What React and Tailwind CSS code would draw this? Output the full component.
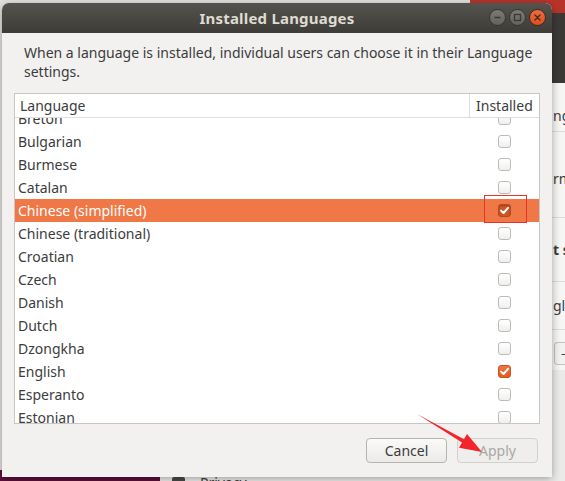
import React from 'react';

const languages = [
  'Breton',
  'Bulgarian',
  'Burmese',
  'Catalan',
  'Chinese (simplified)',
  'Chinese (traditional)',
  'Croatian',
  'Czech',
  'Danish',
  'Dutch',
  'Dzongkha',
  'English',
  'Esperanto',
  'Estonian',
];

const installed = ['Chinese (simplified)', 'English'];
const selected = 'Chinese (simplified)';

const Check = ({ checked, active }) => {
  if (!checked) {
    return (
      <span className="block w-[13px] h-[13px] rounded-[3px] border border-[#bdbcb9] bg-gradient-to-b from-white to-[#efefee]" />
    );
  }
  return (
    <span
      className={
        active
          ? 'flex items-center justify-center w-[13px] h-[13px] rounded-[3px] border border-[#b4491f] bg-[#cf5727] shadow-[inset_0_1px_2px_rgba(0,0,0,0.25)]'
          : 'flex items-center justify-center w-[13px] h-[13px] rounded-[3px] border border-[#c9521f] bg-gradient-to-b from-[#f0743f] to-[#e15a25]'
      }
    >
      <svg width="11" height="11" viewBox="0 0 11 11">
        <path d="M2 5.6 L4.5 8 L9 2.8" fill="none" stroke="white" strokeWidth="2" strokeLinecap="round" strokeLinejoin="round" />
      </svg>
    </span>
  );
};

const WinButton = ({ kind }) => {
  if (kind === 'close') {
    return (
      <span className="flex items-center justify-center w-[17px] h-[17px] rounded-full bg-gradient-to-b from-[#f26b3a] to-[#df4f1c] border border-[#3a2a22]">
        <svg width="9" height="9" viewBox="0 0 9 9">
          <path d="M2 2 L7 7 M7 2 L2 7" stroke="#3a2d27" strokeWidth="1.4" strokeLinecap="round" />
        </svg>
      </span>
    );
  }
  return (
    <span className="flex items-center justify-center w-[17px] h-[17px] rounded-full bg-gradient-to-b from-[#7c7a74] to-[#64625d] border border-[#35342f]">
      {kind === 'min' ? (
        <svg width="9" height="9" viewBox="0 0 9 9">
          <path d="M1.5 4.5 H7.5" stroke="#3a3935" strokeWidth="1.4" />
        </svg>
      ) : (
        <svg width="9" height="9" viewBox="0 0 9 9">
          <rect x="1.5" y="1.5" width="6" height="6" fill="none" stroke="#3a3935" strokeWidth="1.3" />
        </svg>
      )}
    </span>
  );
};

export default function App() {
  return (
    <div className="relative w-[565px] h-[481px] overflow-hidden bg-[#e4e3e1] font-['Noto_Sans',sans-serif]">
      {/* desktop windows behind the dialog */}
      <div className="absolute left-[470px] top-0 w-[95px] h-[13px] bg-[#b8342b]" />
      <div className="absolute left-[552px] top-[13px] w-[60px] h-[470px] flex flex-col bg-[#f6f6f5]">
        <div className="h-[70px] bg-[#3b3a37]" />
        <div className="h-[49px] border-b border-[#dcdcda] flex items-end pb-[5px] text-[14px] text-[#3c3c3c] pl-[1px]">ng</div>
        <div className="h-[86px] border-b border-[#dcdcda] flex items-center pt-[8px] text-[14px] text-[#3c3c3c] pl-[1px]">rm</div>
        <div className="h-[64px] border-b border-[#dcdcda] flex items-center text-[14px] font-bold text-[#3c3c3c] pl-[1px]">t s</div>
        <div className="h-[48px] border-b border-[#dcdcda] flex items-center text-[14px] text-[#3c3c3c] pl-[1px]">gl</div>
        <div className="h-[40px] pt-[12px] pl-[2px]">
          <div className="h-[23px] rounded-l-[4px] border border-r-0 border-[#c4c3bf] bg-[#f2f2f1] flex items-center pl-[6px] text-[#444] text-[13px]">–</div>
        </div>
        <div className="flex-1 bg-[#ebebea]" />
      </div>
      <div className="absolute left-0 top-[470px] w-[160px] h-[11px] bg-[#5e0f3b]" />
      <div className="absolute left-[160px] top-[470px] w-[392px] h-[11px] bg-[#efefee] flex">
        <span className="ml-[12px] mt-[7px] w-[13px] h-[8px] bg-[#4a4a48] rounded-[2px]" />
        <span className="ml-[15px] mt-[6px] text-[14px] leading-[14px] text-[#3c3c3c]">Privacy</span>
      </div>

      {/* dialog */}
      <div className="absolute left-[2px] top-[3px] w-[550px] h-[474px] flex flex-col rounded-t-[7px] overflow-hidden bg-[#f2f1f0] shadow-[0_2px_8px_rgba(0,0,0,0.35)]">
        <div className="relative h-[30px] shrink-0 flex items-center justify-center bg-gradient-to-b from-[#55534d] to-[#3d3c38]">
          <span className="text-[15px] font-bold text-[#dfdbd2] tracking-[0.2px]">Installed Languages</span>
          <div className="absolute right-[6px] top-[6px] flex gap-[3px]">
            <WinButton kind="min" />
            <WinButton kind="max" />
            <WinButton kind="close" />
          </div>
        </div>

        <div className="flex-1 flex flex-col px-[12px]">
          <p className="pl-[10px] pt-[10px] text-[14px] leading-[19px] text-[#3c3c3c]">
            When a language is installed, individual users can choose it in their Language settings.
          </p>

          <div className="mt-[12px] h-[331px] flex flex-col border border-[#c7c6c3] bg-white">
            <div className="h-[24px] shrink-0 flex border-b border-[#dedddb] text-[14px] text-[#3c3c3c]">
              <div className="flex-1 flex items-center pl-[5px]">Language</div>
              <div className="w-[70px] flex items-center pl-[6px] border-l border-[#dedddb]">Installed</div>
            </div>
            <div className="flex-1 overflow-hidden">
              <div className="-mt-[11px]">
                {languages.map((lang) => {
                  const active = lang === selected;
                  return (
                    <div
                      key={lang}
                      className={
                        active
                          ? 'h-[23px] flex items-center bg-[#f07746] text-white text-[14px]'
                          : 'h-[23px] flex items-center text-[#3c3c3c] text-[14px]'
                      }
                    >
                      <div className="flex-1 pl-[3px]">{lang}</div>
                      <div className="w-[70px] flex justify-center">
                        <Check checked={installed.includes(lang)} active={active} />
                      </div>
                    </div>
                  );
                })}
              </div>
            </div>
          </div>

          <div className="mt-[14px] flex justify-end gap-[10px] pr-[2px]">
            <button className="w-[81px] h-[25px] rounded-[4px] border border-[#b6b4ae] bg-gradient-to-b from-[#fafaf9] to-[#ebeae8] text-[14px] text-[#3c3c3c]">
              Cancel
            </button>
            <button className="w-[81px] h-[25px] rounded-[4px] border border-[#d3d1cc] bg-[#efeeec] text-[14px] text-[#a9a8a5]">
              Apply
            </button>
          </div>
        </div>
      </div>

      {/* annotations */}
      <div className="absolute left-[484px] top-[195px] w-[43px] h-[28px] border border-[#e8322b]" />
      <svg className="absolute left-0 top-0 pointer-events-none" width="565" height="481" viewBox="0 0 565 481">
        <polygon points="417,414 464,439.2 467,434 482,452 459,447.8 462,442.6" fill="#f2262a" />
      </svg>
    </div>
  );
}
